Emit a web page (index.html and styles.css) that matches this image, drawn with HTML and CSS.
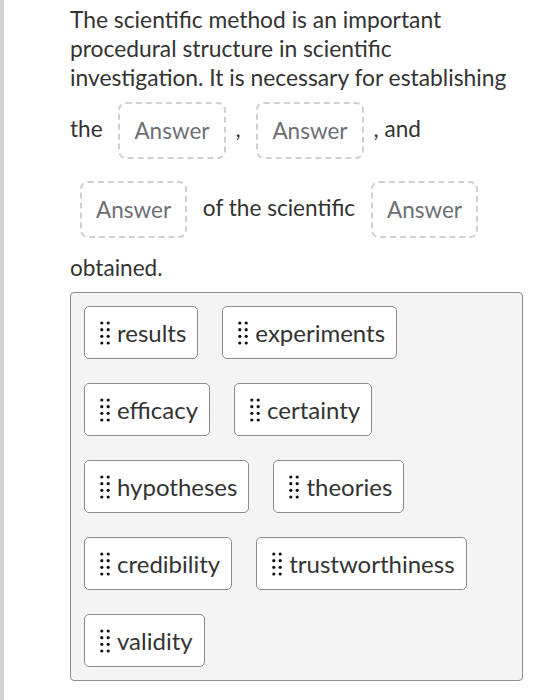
FILE: index.html
```html
<!DOCTYPE html>
<html>
<head>
<meta charset="utf-8">
<link rel="stylesheet" href="styles.css">
</head>
<body>
<div class="page">
  <div class="content">
    <p class="intro">The scientific method is an important procedural structure in scientific investigation. It is necessary for establishing</p>
    <p class="blanks">the <span class="drop">Answer</span>, <span class="drop">Answer</span>, and <span class="drop">Answer</span> of the scientific <span class="drop">Answer</span> obtained.</p>
    <div class="bank">
      <div class="chip"><svg class="handle" viewBox="0 0 10 24"><g fill="#111"><circle cx="1.8" cy="2" r="1.6"/><circle cx="8.2" cy="2" r="1.6"/><circle cx="1.8" cy="8.7" r="1.6"/><circle cx="8.2" cy="8.7" r="1.6"/><circle cx="1.8" cy="15.3" r="1.6"/><circle cx="8.2" cy="15.3" r="1.6"/><circle cx="1.8" cy="22" r="1.6"/><circle cx="8.2" cy="22" r="1.6"/></g></svg>results</div>
      <div class="chip"><svg class="handle" viewBox="0 0 10 24"><g fill="#111"><circle cx="1.8" cy="2" r="1.6"/><circle cx="8.2" cy="2" r="1.6"/><circle cx="1.8" cy="8.7" r="1.6"/><circle cx="8.2" cy="8.7" r="1.6"/><circle cx="1.8" cy="15.3" r="1.6"/><circle cx="8.2" cy="15.3" r="1.6"/><circle cx="1.8" cy="22" r="1.6"/><circle cx="8.2" cy="22" r="1.6"/></g></svg>experiments</div>
      <div class="chip"><svg class="handle" viewBox="0 0 10 24"><g fill="#111"><circle cx="1.8" cy="2" r="1.6"/><circle cx="8.2" cy="2" r="1.6"/><circle cx="1.8" cy="8.7" r="1.6"/><circle cx="8.2" cy="8.7" r="1.6"/><circle cx="1.8" cy="15.3" r="1.6"/><circle cx="8.2" cy="15.3" r="1.6"/><circle cx="1.8" cy="22" r="1.6"/><circle cx="8.2" cy="22" r="1.6"/></g></svg>efficacy</div>
      <div class="chip"><svg class="handle" viewBox="0 0 10 24"><g fill="#111"><circle cx="1.8" cy="2" r="1.6"/><circle cx="8.2" cy="2" r="1.6"/><circle cx="1.8" cy="8.7" r="1.6"/><circle cx="8.2" cy="8.7" r="1.6"/><circle cx="1.8" cy="15.3" r="1.6"/><circle cx="8.2" cy="15.3" r="1.6"/><circle cx="1.8" cy="22" r="1.6"/><circle cx="8.2" cy="22" r="1.6"/></g></svg>certainty</div>
      <div class="chip"><svg class="handle" viewBox="0 0 10 24"><g fill="#111"><circle cx="1.8" cy="2" r="1.6"/><circle cx="8.2" cy="2" r="1.6"/><circle cx="1.8" cy="8.7" r="1.6"/><circle cx="8.2" cy="8.7" r="1.6"/><circle cx="1.8" cy="15.3" r="1.6"/><circle cx="8.2" cy="15.3" r="1.6"/><circle cx="1.8" cy="22" r="1.6"/><circle cx="8.2" cy="22" r="1.6"/></g></svg>hypotheses</div>
      <div class="chip"><svg class="handle" viewBox="0 0 10 24"><g fill="#111"><circle cx="1.8" cy="2" r="1.6"/><circle cx="8.2" cy="2" r="1.6"/><circle cx="1.8" cy="8.7" r="1.6"/><circle cx="8.2" cy="8.7" r="1.6"/><circle cx="1.8" cy="15.3" r="1.6"/><circle cx="8.2" cy="15.3" r="1.6"/><circle cx="1.8" cy="22" r="1.6"/><circle cx="8.2" cy="22" r="1.6"/></g></svg>theories</div>
      <div class="chip"><svg class="handle" viewBox="0 0 10 24"><g fill="#111"><circle cx="1.8" cy="2" r="1.6"/><circle cx="8.2" cy="2" r="1.6"/><circle cx="1.8" cy="8.7" r="1.6"/><circle cx="8.2" cy="8.7" r="1.6"/><circle cx="1.8" cy="15.3" r="1.6"/><circle cx="8.2" cy="15.3" r="1.6"/><circle cx="1.8" cy="22" r="1.6"/><circle cx="8.2" cy="22" r="1.6"/></g></svg>credibility</div>
      <div class="chip"><svg class="handle" viewBox="0 0 10 24"><g fill="#111"><circle cx="1.8" cy="2" r="1.6"/><circle cx="8.2" cy="2" r="1.6"/><circle cx="1.8" cy="8.7" r="1.6"/><circle cx="8.2" cy="8.7" r="1.6"/><circle cx="1.8" cy="15.3" r="1.6"/><circle cx="8.2" cy="15.3" r="1.6"/><circle cx="1.8" cy="22" r="1.6"/><circle cx="8.2" cy="22" r="1.6"/></g></svg>trustworthiness</div>
      <div class="chip"><svg class="handle" viewBox="0 0 10 24"><g fill="#111"><circle cx="1.8" cy="2" r="1.6"/><circle cx="8.2" cy="2" r="1.6"/><circle cx="1.8" cy="8.7" r="1.6"/><circle cx="8.2" cy="8.7" r="1.6"/><circle cx="1.8" cy="15.3" r="1.6"/><circle cx="8.2" cy="15.3" r="1.6"/><circle cx="1.8" cy="22" r="1.6"/><circle cx="8.2" cy="22" r="1.6"/></g></svg>validity</div>
    </div>
  </div>
</div>
</body>
</html>
```
FILE: styles.css
```css
html, body {
  margin: 0;
  padding: 0;
  background: #ffffff;
}
body {
  font-family: Lato, "Open Sans", sans-serif;
  color: #333333;
}
.page {
  width: 560px;
  height: 700px;
  border-left: 4px solid #d2d2d2;
  box-sizing: border-box;
  overflow: hidden;
}
.content {
  padding: 5px 37px 0 66px;
}
.intro {
  margin: 0;
  max-width: 445px;
  font-size: 22.8px;
  line-height: 29px;
  color: #333333;
}
.blanks {
  margin: 0;
  max-width: 445px;
  font-size: 22.6px;
  line-height: 36px;
  color: #333333;
}
.drop {
  display: inline-block;
  vertical-align: middle;
  margin: 10px 10px 12px 10px;
  padding: 0 14px;
  height: 57px;
  line-height: 53px;
  border: 2px dashed #d0d0d0;
  border-radius: 8px;
  box-sizing: border-box;
  color: #6b6f73;
  font-size: 22.5px;
}
.bank {
  margin-top: 6px;
  background: #f4f4f4;
  border: 1px solid #8c8c8c;
  border-radius: 4px;
  padding: 13px 13px 13px 13px;
  display: flex;
  flex-wrap: wrap;
  gap: 24px 24px;
}
.chip {
  display: flex;
  align-items: center;
  height: 53px;
  box-sizing: border-box;
  padding: 0 11px 0 15px;
  background: #ffffff;
  border: 1px solid #8c8c8c;
  border-radius: 5px;
  font-size: 24px;
  color: #333333;
}
.handle {
  width: 10px;
  height: 24px;
  margin-right: 7px;
  flex: none;
}
```
